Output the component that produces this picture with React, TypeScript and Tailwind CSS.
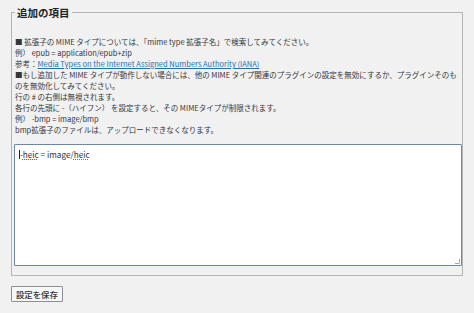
const jp = { fontFamily: '"Noto Sans CJK JP", "Noto Sans", sans-serif' };

export default function App() {
  return (
    <div className="w-[474px] h-[313px] bg-[#f1f1f1] overflow-hidden" style={jp}>
      <div className="pl-[11px] pt-[6px] w-[463px]">
        <fieldset className="border border-[#b5b5b5] pl-[2px] pr-0 pb-[9px] pt-0 m-0 min-w-0">
          <legend className="ml-[1px] px-[2px] text-[10.5px] leading-[13px] font-bold text-[#1d2327]">
            追加の項目
          </legend>
          <div className="mt-[17px] pl-[1px] text-[7.5px] leading-[11px] text-[#32373c] overflow-hidden">
            <p>■ 拡張子の MIME タイプについては、「mime type 拡張子名」で検索してみてください。</p>
            <p>例） epub = application/epub+zip</p>
            <p>
              参考：
              <a className="text-[#2271b1] underline">
                Media Types on the Internet Assigned Numbers Authority (IANA)
              </a>
            </p>
            <p className="whitespace-nowrap">
              ■もし追加した MIME タイプが動作しない場合には、他の MIME タイプ関連のプラグインの設定を無効にするか、プラグインそのも
            </p>
            <p>のを無効化してみてください。</p>
            <p>行の # の右側は無視されます。</p>
            <p>各行の先頭に -（ハイフン） を設定すると、その MIMEタイプが制限されます。</p>
            <p>例） -bmp = image/bmp</p>
            <p>bmp拡張子のファイルは、アップロードできなくなります。</p>
          </div>
          <div className="relative mt-[9px] h-[122px] w-[448px] bg-white border border-[#6c87a8] rounded-[1px] pl-[5px] pt-[4px] text-[8.2px] leading-[11px] text-[#2c3338]">
            <span className="absolute left-[4px] top-[5px] w-px h-[9px] bg-[#222]" />
            -<span className="underline decoration-dotted decoration-[#e04040]">heic</span> = image/
            <span className="underline decoration-dotted decoration-[#e04040]">heic</span>
            <span className="absolute right-[1px] bottom-[1px] w-[5px] h-[5px] border-r border-b border-[#9aa5b1] rounded-br-[2px]" />
          </div>
        </fieldset>
        <button className="mt-[10px] h-[16px] px-[4px] border border-[#8c8f94] bg-[#f6f7f7] rounded-[1px] text-[8.4px] leading-[14px] font-medium text-[#2c3338]">
          設定を保存
        </button>
      </div>
    </div>
  );
}
